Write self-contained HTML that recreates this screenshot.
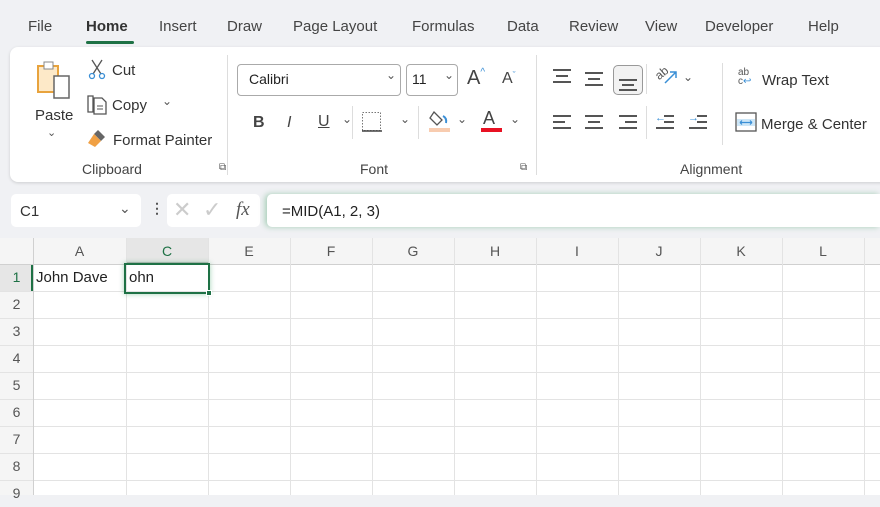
<!DOCTYPE html>
<html><head><style>
*{margin:0;padding:0;box-sizing:border-box}
body{width:880px;height:495px;overflow:hidden;background:#f0f1f4;font-family:"Liberation Sans",sans-serif;color:#333;position:relative}
.a{position:absolute;white-space:nowrap}
.menu{font-size:15px;color:#444;top:18px}
.rib{position:absolute;left:10px;top:47px;width:880px;height:135px;background:#fff;border-radius:8px;box-shadow:0 1px 3px rgba(0,0,0,.15)}
.t{font-size:15px;color:#333}
.lbl{font-size:14px;color:#444}
.sep{position:absolute;width:1px;background:#ddd}
.box{position:absolute;border:1px solid #aaa;border-radius:4px;background:#fff}
.grid{position:absolute;left:0;top:238px;width:880px;height:257px;background:#fff}
.hl{position:absolute;left:0;height:1px;width:880px;background:#e3e3e3}
.vl{position:absolute;top:0;width:1px;height:257px;background:#e3e3e3}
.ch{position:absolute;top:0;height:26px;line-height:26px;text-align:center;font-size:14px;color:#555}
.rh{position:absolute;left:0;width:33px;text-align:center;font-size:14px;color:#555;height:27px;line-height:27px}
.ln{position:absolute;height:1.5px;background:#555}
</style></head><body>
<div class="a menu" style="left:28px">File</div>
<div class="a menu" style="left:86px;color:#333;font-weight:bold">Home</div>
<div class="a" style="left:86px;top:41px;width:48px;height:3px;background:#1e7145;border-radius:2px"></div>
<div class="a menu" style="left:159px">Insert</div>
<div class="a menu" style="left:227px">Draw</div>
<div class="a menu" style="left:293px">Page Layout</div>
<div class="a menu" style="left:412px">Formulas</div>
<div class="a menu" style="left:507px">Data</div>
<div class="a menu" style="left:569px">Review</div>
<div class="a menu" style="left:645px">View</div>
<div class="a menu" style="left:705px">Developer</div>
<div class="a menu" style="left:808px">Help</div>

<div class="rib"></div>
<!-- clipboard -->
<svg class="a" style="left:36px;top:58px" width="36" height="44"><rect x="2" y="8" width="20" height="26" fill="#fde9c8" stroke="#e8a33d" stroke-width="2"/><rect x="8" y="4" width="9" height="7" fill="#fff" stroke="#888"/><rect x="18" y="18" width="15" height="22" fill="#fff" stroke="#666" stroke-width="1.5"/></svg>
<div class="a t" style="left:35px;top:107px">Paste</div>
<div class="a" style="left:47px;top:126px;font-size:11px;color:#555">⌄</div>
<svg class="a" style="left:88px;top:58px" width="18" height="22"><path d="M4 2 L13 16 M14 2 L5 16" stroke="#555" stroke-width="1.3" fill="none"/><circle cx="4" cy="18" r="2.5" fill="none" stroke="#3a8fd6" stroke-width="1.3"/><circle cx="14" cy="18" r="2.5" fill="none" stroke="#3a8fd6" stroke-width="1.3"/></svg>
<div class="a t" style="left:112px;top:62px">Cut</div>
<svg class="a" style="left:86px;top:93px" width="22" height="22"><path d="M2 3 h5 v16 h-5z" fill="none" stroke="#555" stroke-width="1.3"/><path d="M8 5 h8 l4 4 v12 h-12z" fill="#fff" stroke="#555" stroke-width="1.3"/><path d="M11 13h6M11 16h6" stroke="#555"/></svg>
<div class="a t" style="left:112px;top:97px">Copy</div>
<div class="a" style="left:162px;top:94px;font-size:12px;color:#555">⌄</div>
<svg class="a" style="left:86px;top:128px" width="22" height="20"><path d="M12 2 l7 7 -4 4 -7 -7z" fill="#666"/><path d="M8 6 l7 7 -6 6 -7 -4 z" fill="#f0a044"/></svg>
<div class="a t" style="left:113px;top:132px">Format Painter</div>
<div class="a lbl" style="left:82px;top:161px">Clipboard</div>
<div class="a" style="left:219px;top:162px;font-size:10px;color:#555">⧉</div>
<div class="sep" style="left:227px;top:55px;height:120px"></div>
<!-- font -->
<div class="box" style="left:237px;top:64px;height:32px;width:164px"></div>
<div class="a" style="left:249px;top:71px;font-size:14px;color:#222">Calibri</div>
<div class="a" style="left:386px;top:68px;font-size:12px;color:#555">⌄</div>
<div class="box" style="left:406px;top:64px;height:32px;width:52px"></div>
<div class="a" style="left:412px;top:71px;font-size:14px;color:#222">11</div>
<div class="a" style="left:444px;top:68px;font-size:12px;color:#555">⌄</div>
<div class="a" style="left:467px;top:67px;font-size:20px;color:#444">A<span style="font-size:10px;color:#3a8fd6;vertical-align:top">^</span></div>
<div class="a" style="left:502px;top:70px;font-size:16px;color:#444">A<span style="font-size:9px;color:#3a8fd6;vertical-align:top">ˇ</span></div>
<div class="a" style="left:253px;top:114px;font-size:16px;font-weight:bold;color:#444">B</div>
<div class="a" style="left:287px;top:114px;font-size:16px;font-style:italic;color:#444">I</div>
<div class="a" style="left:318px;top:113px;font-size:16px;text-decoration:underline;color:#444">U</div>
<div class="a" style="left:342px;top:112px;font-size:12px;color:#555">⌄</div>
<div class="sep" style="left:352px;top:106px;height:33px"></div>
<svg class="a" style="left:361px;top:111px" width="22" height="22"><rect x="1.5" y="1.5" width="18" height="18" fill="none" stroke="#777" stroke-dasharray="1.5 1.5"/><path d="M1 20h20" stroke="#444" stroke-width="1.5"/></svg>
<div class="a" style="left:400px;top:112px;font-size:12px;color:#555">⌄</div>
<div class="sep" style="left:418px;top:106px;height:33px"></div>
<svg class="a" style="left:428px;top:108px" width="24" height="26"><path d="M6 4 l8 8 -5 5 -7 -7z" fill="none" stroke="#555" stroke-width="1.3"/><path d="M15 8 q4 2 3 7" stroke="#3a8fd6" stroke-width="2" fill="none"/><rect x="1" y="20" width="21" height="4" fill="#f8ccb0"/></svg>
<div class="a" style="left:457px;top:112px;font-size:12px;color:#555">⌄</div>
<div class="a" style="left:483px;top:108px;font-size:18px;color:#444">A</div>
<div class="a" style="left:481px;top:128px;width:21px;height:4px;background:#e81123"></div>
<div class="a" style="left:510px;top:112px;font-size:12px;color:#555">⌄</div>
<div class="a lbl" style="left:360px;top:161px">Font</div>
<div class="a" style="left:520px;top:162px;font-size:10px;color:#555">⧉</div>
<div class="sep" style="left:536px;top:55px;height:120px"></div>
<!-- alignment -->
<div class="ln" style="left:553px;top:69px;width:18px"></div><div class="ln" style="left:556px;top:75px;width:12px"></div><div class="ln" style="left:553px;top:81px;width:18px"></div>
<div class="ln" style="left:585px;top:72px;width:18px"></div><div class="ln" style="left:588px;top:78px;width:12px"></div><div class="ln" style="left:585px;top:84px;width:18px"></div>
<div class="a" style="left:613px;top:65px;width:30px;height:30px;border:1px solid #999;border-radius:5px;background:#f2f2f2"></div>
<div class="ln" style="left:619px;top:79px;width:18px"></div><div class="ln" style="left:622px;top:84px;width:12px"></div><div class="ln" style="left:619px;top:89px;width:18px"></div>
<div class="sep" style="left:646px;top:64px;height:30px"></div>
<div class="a" style="left:655px;top:66px;font-size:12px;color:#555;transform:rotate(-40deg)">ab</div>
<svg class="a" style="left:664px;top:70px" width="14" height="14"><path d="M1 13 L12 2 M6 2h6v6" stroke="#3a8fd6" stroke-width="1.5" fill="none"/></svg>
<div class="a" style="left:683px;top:70px;font-size:12px;color:#555">⌄</div>
<div class="ln" style="left:553px;top:115px;width:18px"></div><div class="ln" style="left:553px;top:121px;width:12px"></div><div class="ln" style="left:553px;top:127px;width:18px"></div>
<div class="ln" style="left:585px;top:115px;width:18px"></div><div class="ln" style="left:588px;top:121px;width:12px"></div><div class="ln" style="left:585px;top:127px;width:18px"></div>
<div class="ln" style="left:619px;top:115px;width:18px"></div><div class="ln" style="left:625px;top:121px;width:12px"></div><div class="ln" style="left:619px;top:127px;width:18px"></div>
<div class="sep" style="left:646px;top:106px;height:33px"></div>
<div class="a" style="left:655px;top:112px;font-size:11px;color:#3a8fd6">←</div><div class="ln" style="left:664px;top:115px;width:10px"></div><div class="ln" style="left:664px;top:121px;width:10px"></div><div class="ln" style="left:656px;top:127px;width:18px"></div>
<div class="a" style="left:688px;top:112px;font-size:11px;color:#3a8fd6">→</div><div class="ln" style="left:697px;top:115px;width:10px"></div><div class="ln" style="left:697px;top:121px;width:10px"></div><div class="ln" style="left:689px;top:127px;width:18px"></div>
<div class="sep" style="left:722px;top:63px;height:82px"></div>
<div class="a" style="left:738px;top:68px;font-size:10px;line-height:9px;color:#555">ab<br>c<span style="color:#3a8fd6">↩</span></div>
<div class="a t" style="left:762px;top:72px">Wrap Text</div>
<svg class="a" style="left:735px;top:112px" width="22" height="20"><rect x="1" y="1" width="20" height="18" fill="#fff" stroke="#555" stroke-width="1.3"/><rect x="2" y="7" width="18" height="7" fill="#cde6f7"/><path d="M5 10.5h12M5 10.5l2-2M5 10.5l2 2M17 10.5l-2-2M17 10.5l-2 2" stroke="#3a8fd6" stroke-width="1.2" fill="none"/></svg>
<div class="a t" style="left:761px;top:116px">Merge &amp; Center</div>
<div class="a lbl" style="left:680px;top:161px">Alignment</div>

<!-- formula bar -->
<div class="a" style="left:11px;top:194px;width:130px;height:33px;background:#fff;border-radius:5px"></div>
<div class="a" style="left:20px;top:203px;font-size:15px;color:#333">C1</div>
<div class="a" style="left:119px;top:200px;font-size:14px;color:#555">⌄</div>
<div class="a" style="left:150px;top:200px;font-size:14px;color:#555;font-weight:bold">⋮</div>
<div class="a" style="left:167px;top:194px;width:93px;height:33px;background:#fff;border-radius:5px"></div>
<div class="a" style="left:173px;top:197px;font-size:22px;color:#ccc">✕</div>
<div class="a" style="left:203px;top:197px;font-size:22px;color:#ccc">✓</div>
<div class="a" style="left:236px;top:199px;font-size:19px;font-style:italic;font-family:'Liberation Serif',serif;color:#555">fx</div>
<div class="a" style="left:267px;top:194px;width:613px;height:33px;background:#fff;border-radius:5px 0 0 5px;box-shadow:-2px 0 6px rgba(30,140,70,.35)"></div>
<div class="a" style="left:282px;top:203px;font-size:15px;color:#222">=MID(A1, 2, 3)</div>

<!-- grid -->
<div class="grid">
<div class="a" style="left:0;top:0;width:880px;height:26px;background:#f5f5f5"></div>
<div class="a" style="left:0;top:26px;width:33px;height:231px;background:#f5f5f5"></div>
<div class="a" style="left:126px;top:0;width:82px;height:26px;background:#e6e6e6;border-bottom:2px solid #bcbcbc"></div>
<div class="a" style="left:0;top:26px;width:33px;height:27px;background:#e6e6e6"></div>
<div class="a" style="left:31px;top:26px;width:2px;height:27px;background:#1e7145"></div>
<div class="hl" style="top:26px;background:#d0d0d0"></div>
<div class="hl" style="top:53px"></div><div class="hl" style="top:80px"></div><div class="hl" style="top:107px"></div><div class="hl" style="top:134px"></div><div class="hl" style="top:161px"></div><div class="hl" style="top:188px"></div><div class="hl" style="top:215px"></div><div class="hl" style="top:242px"></div>
<div class="vl" style="left:33px;background:#d0d0d0"></div><div class="vl" style="left:126px"></div><div class="vl" style="left:208px"></div><div class="vl" style="left:290px"></div><div class="vl" style="left:372px"></div><div class="vl" style="left:454px"></div><div class="vl" style="left:536px"></div><div class="vl" style="left:618px"></div><div class="vl" style="left:700px"></div><div class="vl" style="left:782px"></div><div class="vl" style="left:864px"></div>
<div class="ch" style="left:33px;width:93px">A</div><div class="ch" style="left:126px;width:82px;color:#1e7145">C</div><div class="ch" style="left:208px;width:82px">E</div><div class="ch" style="left:290px;width:82px">F</div><div class="ch" style="left:372px;width:82px">G</div><div class="ch" style="left:454px;width:82px">H</div><div class="ch" style="left:536px;width:82px">I</div><div class="ch" style="left:618px;width:82px">J</div><div class="ch" style="left:700px;width:82px">K</div><div class="ch" style="left:782px;width:82px">L</div>
<div class="rh" style="top:26px;color:#1e7145">1</div><div class="rh" style="top:53px">2</div><div class="rh" style="top:80px">3</div><div class="rh" style="top:107px">4</div><div class="rh" style="top:134px">5</div><div class="rh" style="top:161px">6</div><div class="rh" style="top:188px">7</div><div class="rh" style="top:215px">8</div><div class="rh" style="top:242px">9</div>
<div class="a" style="left:36px;top:31px;font-size:15px;color:#222">John Dave</div>
<div class="a" style="left:124px;top:25px;width:86px;height:31px;border:2px solid #1e7145;box-shadow:0 0 5px rgba(30,140,70,.4)"></div>
<div class="a" style="left:206px;top:52px;width:6px;height:6px;background:#1e7145;border:1px solid #fff"></div>
<div class="a" style="left:129px;top:31px;font-size:15px;color:#222">ohn</div>
</div>
</body></html>
